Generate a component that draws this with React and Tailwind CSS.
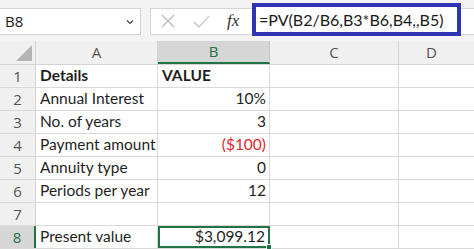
import React from 'react';

const rows = [
  { n: 1, a: 'Details', b: 'VALUE', bold: true },
  { n: 2, a: 'Annual Interest', b: '10%' },
  { n: 3, a: 'No. of years', b: '3' },
  { n: 4, a: 'Payment amount', b: '($100)', red: true },
  { n: 5, a: 'Annuity type', b: '0' },
  { n: 6, a: 'Periods per year', b: '12' },
  { n: 7, a: '', b: '' },
  { n: 8, a: 'Present value', b: '$3,099.12', selected: true },
];

const cellFont = { fontFamily: '"Lato", "Open Sans", sans-serif' };

const App = () => {
  return (
    <div className="w-[474px] h-[249px] overflow-hidden bg-white text-[#1f1f1f]" style={cellFont}>
      {/* Formula bar */}
      <div className="relative h-[41px] bg-[#f3f3f3] flex items-center pt-[1px]">
        <div className="w-[141px] h-[27px] bg-white border border-[#d4d4d4] border-l-0 flex items-center justify-between pl-[5px] pr-[6px]">
          <span className="text-[15px] text-[#222]" style={{ fontFamily: '"Open Sans", sans-serif' }}>B8</span>
          <svg width="8" height="6" viewBox="0 0 8 6" className="mt-[2px]">
            <path d="M1 1.5 L4 4.5 L7 1.5" fill="none" stroke="#444" strokeWidth="1.2" />
          </svg>
        </div>
        <div className="ml-[9px] flex-1 h-[27px] bg-white border border-[#d4d4d4] border-r-0 flex items-center">
          <svg width="14" height="14" viewBox="0 0 14 14" className="ml-[10px]">
            <path d="M1 1 L13 13 M13 1 L1 13" stroke="#b8b8b8" strokeWidth="1.1" />
          </svg>
          <svg width="17" height="13" viewBox="0 0 17 13" className="ml-[18px]">
            <path d="M1 7 L6 12 L16 1" fill="none" stroke="#b8b8b8" strokeWidth="1.1" />
          </svg>
          <span className="ml-[17px] text-[17px] italic text-[#333]" style={{ fontFamily: '"Liberation Serif", serif' }}>fx</span>
        </div>
        <div className="absolute left-[252px] top-[3px] w-[209px] h-[33px] border-[4px] border-[#2f34b3] bg-white flex items-center pl-[3px]">
          <span className="text-[16px] text-[#1a1a1a]" style={{ fontFamily: '"Lato", sans-serif' }}>=PV(B2/B6,B3*B6,B4,,B5)</span>
        </div>
      </div>

      {/* Column headers */}
      <div className="flex h-[24px] bg-[#f0f0f0] border-b border-[#d4d4d4] text-[15px] text-[#555]" style={{ fontFamily: '"Open Sans", sans-serif' }}>
        <div className="w-[36px] border-r border-[#d4d4d4] flex items-end justify-end pr-[3px] pb-[3px]">
          <svg width="16" height="16" viewBox="0 0 16 16">
            <path d="M16 0 L16 16 L0 16 Z" fill="#b4b4b4" />
          </svg>
        </div>
        <div className="w-[122px] border-r border-[#d4d4d4] flex items-center justify-center">A</div>
        <div className="w-[112px] bg-[#d6d6d6] border-r border-[#c4c4c4] border-b-2 border-b-[#217346] text-[#217346] flex items-center justify-center">B</div>
        <div className="w-[129px] border-r border-[#d4d4d4] flex items-center justify-center">C</div>
        <div className="flex-1 flex items-center justify-center pr-[10px]">D</div>
      </div>

      {/* Rows */}
      {rows.map((r) => (
        <div key={r.n} className="flex h-[23px] border-b border-[#dadada] text-[15.5px]">
          <div
            className={`w-[36px] flex items-center justify-center text-[15px] text-[#555] ${
              r.selected ? 'bg-[#d6d6d6] text-[#217346] border-r-2 border-[#217346]' : 'bg-[#f0f0f0] border-r border-[#d4d4d4]'
            }`}
            style={{ fontFamily: '"Open Sans", sans-serif' }}
          >
            {r.n}
          </div>
          <div className={`w-[122px] border-r border-[#dadada] flex items-center pl-[4px] ${r.bold ? 'font-bold' : ''}`}>
            {r.a}
          </div>
          <div
            className={`relative w-[112px] flex items-center pr-[3px] ${
              r.bold ? 'font-bold justify-start pl-[4px]' : 'justify-end'
            } ${r.red ? 'text-[#e0282e]' : ''} ${
              r.selected ? 'border-2 border-[#217346]' : 'border-r border-[#dadada]'
            }`}
          >
            {r.b}
            {r.selected && (
              <span className="absolute -right-[4px] -bottom-[4px] w-[6px] h-[6px] bg-[#217346] border border-white" />
            )}
          </div>
          <div className="w-[129px] border-r border-[#dadada]" />
          <div className="flex-1" />
        </div>
      ))}
    </div>
  );
};

export default App;
